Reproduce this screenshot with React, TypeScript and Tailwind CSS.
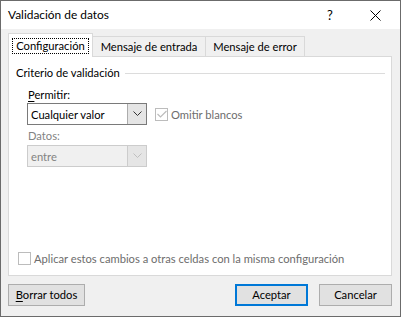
import React from 'react';

const font = { fontFamily: 'Lato, "Liberation Sans", sans-serif' };

const Chevron: React.FC<{ color: string }> = ({ color }) => (
    <svg width="9" height="6" viewBox="0 0 9 6">
        <polyline points="0.5,0.5 4.5,4.5 8.5,0.5" fill="none" stroke={color} strokeWidth="1" />
    </svg>
);

const App: React.FC = () => {
    return (
        <div className="w-[401px] h-[317px] bg-[#f0f0f0] border border-[#6b6b6b] flex flex-col text-[11.2px] text-black leading-none whitespace-nowrap" style={font}>
            {/* Title bar */}
            <div className="h-[28px] bg-white flex items-center relative shrink-0">
                <span className="ml-[7px] text-[11.9px]">Validación de datos</span>
                <span className="absolute left-[326px] top-[8px] text-[13px]">?</span>
                <svg className="absolute left-[369px] top-[9px]" width="11" height="11" viewBox="0 0 11 11">
                    <path d="M0.5,0.5 L10.5,10.5 M10.5,0.5 L0.5,10.5" stroke="#000" strokeWidth="1" />
                </svg>
            </div>

            {/* Tabs */}
            <div className="flex items-end ml-[7px] mt-[4px] h-[24px] relative z-10">
                <div className="w-[85px] h-[24px] shrink-0 bg-white border border-b-0 border-[#d9d9d9] flex items-center justify-center">
                    <span className="border border-dotted border-black px-[3px] h-[16px] flex items-center">Configuración</span>
                </div>
                <div className="w-[113px] h-[20px] shrink-0 mb-px border border-l-0 border-b-0 border-[#d9d9d9] flex items-center justify-center">
                    Mensaje de entrada
                </div>
                <div className="w-[99px] h-[20px] shrink-0 mb-px border border-l-0 border-b-0 border-[#d9d9d9] flex items-center justify-center">
                    Mensaje de error
                </div>
            </div>

            {/* Panel */}
            <div className="ml-[7px] -mt-px w-[384px] h-[220px] bg-white border border-[#d9d9d9] flex flex-col pl-[7px] pr-[6px]">
                <div className="flex items-center mt-[9px] h-[14px]">
                    <span>Criterio de validación</span>
                    <div className="flex-1 h-px bg-[#dcdcdc] ml-[5px]"></div>
                </div>

                <div className="ml-[12px] mt-[9px]">
                    <span><span className="underline underline-offset-2">P</span>ermitir:</span>
                </div>
                <div className="flex items-center mt-[3px] ml-[11px]">
                    <div className="w-[120px] h-[22px] border border-[#7a7a7a] flex">
                        <div className="flex-1 flex items-center pl-[3px]">Cualquier valor</div>
                        <div className="w-[19px] bg-[#e5e5e5] border-l border-[#acacac] flex items-center justify-center">
                            <Chevron color="#333" />
                        </div>
                    </div>
                    <div className="ml-[8px] w-[13px] h-[13px] border border-[#bcbcbc] bg-white flex items-center justify-center">
                        <svg width="10" height="8" viewBox="0 0 10 8">
                            <polyline points="0.5,4 3.5,7 9.5,1" fill="none" stroke="#bcbcbc" strokeWidth="1.2" />
                        </svg>
                    </div>
                    <span className="ml-[3px] text-[#6d6d6d]">Omitir blancos</span>
                </div>

                <div className="ml-[12px] mt-[5px] text-[#838383]">Datos:</div>
                <div className="ml-[11px] mt-[4px] w-[120px] h-[22px] border border-[#cccccc] bg-[#f0f0f0] flex">
                    <div className="flex-1 flex items-center pl-[3px] text-[#838383]">entre</div>
                    <div className="w-[19px] bg-[#e5e5e5] border-l border-[#cccccc] flex items-center justify-center">
                        <Chevron color="#bfbfbf" />
                    </div>
                </div>

                <div className="flex items-center mt-auto mb-[10px] ml-[2px]">
                    <div className="w-[13px] h-[13px] border border-[#bcbcbc] bg-white"></div>
                    <span className="ml-[3px] text-[#6d6d6d]">Aplicar estos cambios a otras celdas con la misma configuración</span>
                </div>
            </div>

            {/* Buttons */}
            <div className="flex items-center ml-[7px] mt-[8px] pr-[8px]">
                <button className="w-[77px] h-[22px] shrink-0 bg-[#e1e1e1] border border-[#adadad] flex items-center justify-center">
                    <span><span className="underline underline-offset-2">B</span>orrar todos</span>
                </button>
                <div className="flex-1"></div>
                <button className="w-[73px] h-[22px] shrink-0 bg-[#e1e1e1] border-2 border-[#0078d7] flex items-center justify-center">Aceptar</button>
                <button className="ml-[11px] w-[73px] h-[22px] shrink-0 bg-[#e1e1e1] border border-[#adadad] flex items-center justify-center">Cancelar</button>
            </div>
        </div>
    );
};

export default App;
